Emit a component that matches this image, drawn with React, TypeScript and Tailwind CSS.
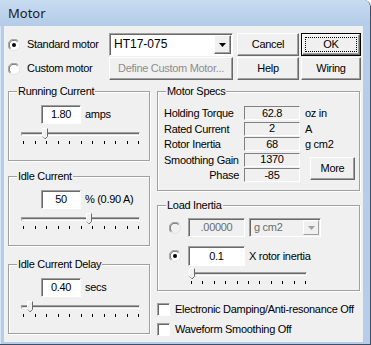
import React from 'react';

const Radio = ({ checked = false, disabled = false }: { checked?: boolean; disabled?: boolean }) => (
  <svg width="12" height="12" viewBox="0 0 12 12" className="shrink-0">
    <circle cx="6" cy="6" r="5.5" fill={disabled ? '#f0f0f0' : '#fff'} stroke="#e3e3e3" />
    <path d="M1.8 10.2 A5.5 5.5 0 0 1 10.2 1.8" fill="none" stroke="#a0a0a0" />
    <path d="M2.6 9.4 A4.5 4.5 0 0 1 9.4 2.6" fill="none" stroke="#696969" />
    {checked && <circle cx="6" cy="6" r="2" fill="#000" />}
  </svg>
);

const Thumb = () => (
  <svg width="7" height="12" viewBox="0 0 7 12">
    <path d="M0.5 0.5 H5.5 V8.5 L3 11 L0.5 8.5 Z" fill="#f0f0f0" />
    <path d="M0.5 8.5 V0.5 H5.5" fill="none" stroke="#fff" />
    <path d="M5.5 0.5 V8.5 L3 11" fill="none" stroke="#696969" />
    <path d="M0.5 8.5 L3 11" fill="none" stroke="#a0a0a0" />
  </svg>
);

const ticks = [0, 1, 2, 3, 4, 5, 6, 7, 8, 9, 10];

// trackbar: groove + pointer thumb + row of ticks
const Slider = ({ thumb, className }: { thumb: string; className: string }) => (
  <div className={`relative h-[20px] ${className}`}>
    <div className="absolute left-0 right-0 top-[4px] h-[4px] border border-t-[#a0a0a0] border-l-[#a0a0a0] border-r-white border-b-white bg-[#e3e3e3] shadow-[inset_0_1px_0_#696969]" />
    <div className={`absolute top-0 ${thumb}`}>
      <Thumb />
    </div>
    <div className="absolute left-[2px] right-[1px] top-[13px] flex justify-between">
      {ticks.map((t) => (
        <div key={t} className="w-[1px] h-[3px] bg-black" />
      ))}
    </div>
  </div>
);

const Button = ({
  label,
  className,
  disabled = false,
  isDefault = false,
}: {
  label: string;
  className: string;
  disabled?: boolean;
  isDefault?: boolean;
}) => (
  <div className={`h-[23px] ${isDefault ? 'border border-black' : ''} ${className}`}>
    <div className="h-full flex border border-t-white border-l-white border-r-[#696969] border-b-[#696969] bg-[#f0f0f0] shadow-[inset_-1px_-1px_0_#a0a0a0]">
      {isDefault ? (
        <div className="flex-1 m-[2px] border border-dotted border-black flex items-center justify-center">
          {label}
        </div>
      ) : (
        <div className={`flex-1 flex items-center justify-center whitespace-nowrap ${disabled ? 'text-[#8d8d8d]' : ''}`}>
          {label}
        </div>
      )}
    </div>
  </div>
);

const Arrow = ({ color = '#000' }: { color?: string }) => (
  <svg width="7" height="4" viewBox="0 0 7 4">
    <path d="M0 0 H7 L3.5 4 Z" fill={color} />
  </svg>
);

const Edit = ({ value, className, disabled = false }: { value: string; className: string; disabled?: boolean }) => (
  <div
    className={`flex items-center justify-center border border-t-[#a0a0a0] border-l-[#a0a0a0] border-r-white border-b-white shadow-[inset_1px_1px_0_#696969] ${
      disabled ? 'bg-[#f0f0f0] text-[#6d6d6d]' : 'bg-white'
    } ${className}`}
  >
    {value}
  </div>
);

const Group = ({ title, className, children }: { title: string; className: string; children?: React.ReactNode }) => (
  <fieldset className={`border border-[#a0a0a0] shadow-[inset_1px_1px_0_#fff,1px_1px_0_#fff] ${className}`}>
    <legend className="ml-[8px] px-[1px] bg-[#f0f0f0] leading-[13px]">{title}</legend>
    {children}
  </fieldset>
);

const Check = ({ label }: { label: string }) => (
  <div className="flex items-center h-[13px]">
    <div className="w-[13px] h-[13px] shrink-0 bg-white border border-t-[#a0a0a0] border-l-[#a0a0a0] border-r-white border-b-white shadow-[inset_1px_1px_0_#696969]" />
    <span className="ml-[5px] whitespace-nowrap">{label}</span>
  </div>
);

const specs = [
  { label: 'Holding Torque', value: '62.8', unit: 'oz in' },
  { label: 'Rated Current', value: '2', unit: 'A' },
  { label: 'Rotor Inertia', value: '68', unit: 'g cm2' },
];

export default function App() {
  return (
    <div className="w-[371px] h-[345px] flex flex-col bg-[#b5cde9] border-r border-b border-[#3d4f66] rounded-tr-[7px] overflow-hidden text-[11px] leading-[13px] tracking-[-0.3px] text-black font-['Liberation_Sans',Arial,sans-serif]">
      <div className="h-[26px] shrink-0 flex items-center pl-[8px] bg-linear-to-b from-[#c8dcf1] to-[#b3cbe8]">
        <span className="font-['Noto_Sans',sans-serif] text-[13px] tracking-normal text-[#1b1b1b]">Motor</span>
      </div>

      <div className="flex-1 flex pl-[3px] pr-[7px] pb-[2px] border-l border-l-[#d7e4f3]">
        <div className="flex-1 bg-[#f0f0f0] pl-[4px] pt-[7px] flex flex-col">
          {/* motor choice + dialog buttons */}
          <div className="flex flex-col gap-[1px]">
            <div className="flex items-center h-[23px]">
              <div className="w-[101px] flex items-center gap-[7px]">
                <Radio checked />
                <span className="whitespace-nowrap">Standard motor</span>
              </div>
              <div className="w-[124px] h-[23px] flex items-stretch border border-t-[#a0a0a0] border-l-[#a0a0a0] border-r-white border-b-white shadow-[inset_1px_1px_0_#696969] bg-white p-[1px]">
                <div className="flex-1 flex items-center pl-[3px] text-[12px] tracking-normal">HT17-075</div>
                <div className="w-[17px] flex items-center justify-center border border-t-white border-l-white border-r-[#696969] border-b-[#696969] bg-[#f0f0f0] shadow-[inset_-1px_-1px_0_#a0a0a0]">
                  <Arrow />
                </div>
              </div>
              <Button label="Cancel" className="ml-[4px] w-[62px]" />
              <Button label="OK" className="ml-[2px] w-[60px]" isDefault />
            </div>
            <div className="flex items-center h-[23px]">
              <div className="w-[101px] flex items-center gap-[7px]">
                <Radio />
                <span className="whitespace-nowrap">Custom motor</span>
              </div>
              <Button label="Define Custom Motor..." className="w-[124px]" disabled />
              <Button label="Help" className="ml-[4px] w-[62px]" />
              <Button label="Wiring" className="ml-[2px] w-[60px]" />
            </div>
          </div>

          <div className="flex mt-[5px]">
            {/* left column */}
            <div className="w-[142px] flex flex-col">
              <Group title="Running Current" className="h-[76px]">
                <div className="flex items-center mt-[7px] pl-[32px]">
                  <Edit value="1.80" className="w-[40px] h-[19px]" />
                  <span className="ml-[4px]">amps</span>
                </div>
                <Slider thumb="left-[21px]" className="ml-[12px] mt-[4px] w-[119px]" />
              </Group>
              <Group title="Idle Current" className="h-[76px] mt-[9px]">
                <div className="flex items-center mt-[7px] pl-[32px]">
                  <Edit value="50" className="w-[40px] h-[19px]" />
                  <span className="ml-[4px]">% (0.90 A)</span>
                </div>
                <Slider thumb="left-[65px]" className="ml-[12px] mt-[4px] w-[119px]" />
              </Group>
              <Group title="Idle Current Delay" className="h-[76px] mt-[12px]">
                <div className="flex items-center mt-[7px] pl-[32px]">
                  <Edit value="0.40" className="w-[40px] h-[19px]" />
                  <span className="ml-[4px]">secs</span>
                </div>
                <Slider thumb="left-[6px]" className="ml-[12px] mt-[4px] w-[119px]" />
              </Group>
            </div>

            {/* right column */}
            <div className="ml-[7px] w-[203px] flex flex-col">
              <Group title="Motor Specs" className="h-[106px]">
                <div className="grid grid-cols-[75px_56px_auto] gap-x-[5px] gap-y-[1.5px] mt-[8px] pl-[6px] whitespace-nowrap">
                  {specs.map((s) => (
                    <React.Fragment key={s.label}>
                      <div className="h-[14px] leading-[14px]">{s.label}</div>
                      <div className="h-[14px] flex items-center justify-center border border-t-[#808080] border-l-[#808080] border-r-white border-b-white">
                        {s.value}
                      </div>
                      <div className="h-[14px] leading-[14px]">{s.unit}</div>
                    </React.Fragment>
                  ))}
                  <div className="h-[14px] leading-[14px]">Smoothing Gain</div>
                  <div className="h-[14px] flex items-center justify-center border border-t-[#808080] border-l-[#808080] border-r-white border-b-white">
                    1370
                  </div>
                  <div className="row-span-2 flex items-center">
                    <Button label="More" className="ml-[5px] mt-[3px] w-[45px] h-[20px]" />
                  </div>
                  <div className="h-[14px] leading-[14px] text-right">Phase</div>
                  <div className="h-[14px] flex items-center justify-center border border-t-[#808080] border-l-[#808080] border-r-white border-b-white">
                    -85
                  </div>
                </div>
              </Group>

              <Group title="Load Inertia" className="h-[92px] mt-[8px]">
                <div className="flex items-center mt-[6px] pl-[11px] h-[19px]">
                  <Radio disabled />
                  <Edit value=".00000" className="ml-[7px] w-[57px] h-[19px]" disabled />
                  <div className="ml-[4px] w-[72px] h-[19px] flex items-stretch border border-t-[#a0a0a0] border-l-[#a0a0a0] border-r-white border-b-white shadow-[inset_1px_1px_0_#696969] bg-[#f0f0f0] p-[1px]">
                    <div className="flex-1 flex items-center pl-[3px] text-[#6d6d6d]">g cm2</div>
                    <div className="w-[16px] flex items-center justify-center border border-t-white border-l-white border-r-[#a0a0a0] border-b-[#a0a0a0] bg-[#f0f0f0]">
                      <Arrow color="#a0a0a0" />
                    </div>
                  </div>
                </div>
                <div className="flex items-center mt-[9px] pl-[11px] h-[20px]">
                  <Radio checked />
                  <Edit value="0.1" className="ml-[7px] w-[57px] h-[20px]" />
                  <span className="ml-[4px]">X rotor inertia</span>
                </div>
                <Slider thumb="left-0" className="ml-[31px] mt-[2px] w-[118px]" />
              </Group>

              <div className="flex flex-col gap-[7px] mt-[12px]">
                <Check label="Electronic Damping/Anti-resonance Off" />
                <Check label="Waveform Smoothing Off" />
              </div>
            </div>
          </div>
        </div>
      </div>
    </div>
  );
}
